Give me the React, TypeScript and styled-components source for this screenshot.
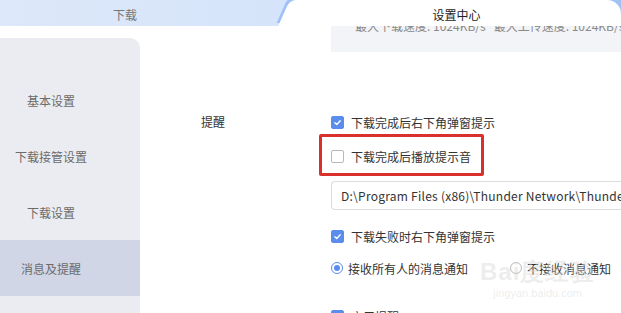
import React from "react";
import styled, { createGlobalStyle } from "styled-components";

const Global = createGlobalStyle`
  html, body { margin: 0; padding: 0; background: #fff; }
  body { font-family: "Noto Sans CJK SC", "Microsoft YaHei", sans-serif; }
  #root { width: 621px; height: 313px; overflow: hidden; }
`;

const Page = styled.div`
  position: relative;
  width: 621px;
  height: 313px;
  overflow: hidden;
  display: flex;
  flex-direction: column;
  background: #fff;
  font-size: 12px;
`;

const TabBar = styled.div`
  position: relative;
  z-index: 2;
  flex: 0 0 26px;
  display: flex;
  background: linear-gradient(90deg, #dde8f9 0%, #d3e3fb 60%, #c9ddfb 100%);
`;

const Tab = styled.div<{ $active?: boolean }>`
  position: relative;
  display: flex;
  align-items: center;
  justify-content: center;
  color: ${(p) => (p.$active ? "#222" : "#777")};
  ${(p) =>
    p.$active
      ? `
    flex: 1;
    margin-left: 14px;
    background: #fff;
    border-top-right-radius: 14px;
    box-shadow: 10px -6px 0 -2px #9fc2f6;
    &::before {
      content: "";
      position: absolute;
      left: -8px;
      top: 0;
      bottom: 0;
      width: 24px;
      background: #fff;
      transform: skewX(-24deg);
      border-top-left-radius: 6px;
      box-shadow: -3px -3px 0 0 #9fc2f6;
    }
    & > span { position: relative; padding-top: 3px; }
  `
      : `
    width: 278px;
    padding-top: 2px;
    & > span { position: relative; left: -14px; }
  `}
`;

const Body = styled.div`
  flex: 1;
  display: flex;
  min-height: 0;
`;

const Sidebar = styled.nav`
  flex: 0 0 140px;
  margin-top: 12px;
  padding-top: 34px;
  background: #ebecf1;
  border-top-right-radius: 10px;
  display: flex;
  flex-direction: column;
`;

const NavItem = styled.div<{ $active?: boolean }>`
  flex-shrink: 0;
  height: 56px;
  display: flex;
  align-items: center;
  padding-left: ${(p) => (p.$active ? "21px" : "0")};
  justify-content: ${(p) => (p.$active ? "flex-start" : "center")};
  padding-right: ${(p) => (p.$active ? "0" : "38px")};
  color: #6b6b6b;
  background: ${(p) => (p.$active ? "#d0d6e6" : "transparent")};
`;

const Content = styled.div`
  position: relative;
  flex: 1;
  overflow: hidden;
  padding-left: 61px;
  display: flex;
  flex-direction: column;
`;

const SpeedBox = styled.div`
  flex-shrink: 0;
  margin-left: 130px;
  height: 26px;
  background: #f3f4f7;
  overflow: hidden;
  color: #8a8a8a;
  font-size: 12px;
  line-height: 14px;
  white-space: nowrap;
  & > span { display: block; margin-top: -7px; padding-left: 24px; }
`;

const Section = styled.div`
  flex-shrink: 0;
  display: grid;
  grid-template-columns: 130px 1fr;
  margin-top: 60px;
`;

const Label = styled.div`
  color: #333;
  line-height: 20px;
`;

const Controls = styled.div`
  display: flex;
  flex-direction: column;
`;

const Row = styled.div<{ $mt?: number }>`
  flex-shrink: 0;
  height: 20px;
  display: flex;
  align-items: center;
  gap: 7px;
  color: #333;
  white-space: nowrap;
  margin-top: ${(p) => p.$mt ?? 0}px;
`;

const Box = styled.span<{ $checked?: boolean }>`
  width: 13px;
  height: 13px;
  box-sizing: border-box;
  border-radius: 2px;
  display: inline-flex;
  align-items: center;
  justify-content: center;
  flex: 0 0 13px;
  background: ${(p) => (p.$checked ? "#5b8def" : "#fff")};
  border: 1px solid ${(p) => (p.$checked ? "#5b8def" : "#b9b9b9")};
`;

const Radio = styled.span<{ $checked?: boolean }>`
  width: 12px;
  height: 12px;
  box-sizing: border-box;
  border-radius: 50%;
  flex: 0 0 12px;
  border: 1px solid ${(p) => (p.$checked ? "#5b8def" : "#b9b9b9")};
  display: inline-flex;
  align-items: center;
  justify-content: center;
  &::after {
    content: "";
    width: 6px;
    height: 6px;
    border-radius: 50%;
    background: ${(p) => (p.$checked ? "#5b8def" : "transparent")};
  }
`;

const RadioItem = styled.span<{ $ml?: number }>`
  display: inline-flex;
  align-items: center;
  gap: 5px;
  margin-left: ${(p) => p.$ml ?? 0}px;
`;

const PathInput = styled.div`
  flex-shrink: 0;
  margin-top: 15px;
  height: 29px;
  box-sizing: border-box;
  border: 1px solid #dcdcdc;
  border-right: none;
  border-radius: 4px 0 0 4px;
  display: flex;
  align-items: center;
  padding-left: 9px;
  color: #333;
  white-space: nowrap;
  overflow: hidden;
  font-size: 12px;
  letter-spacing: 0.25px;
`;

const Highlight = styled.div`
  position: absolute;
  left: 179px;
  top: 108px;
  width: 165px;
  height: 42px;
  box-sizing: border-box;
  border: 3px solid #d9302c;
  border-radius: 2px;
  pointer-events: none;
`;

const Watermark = styled.div`
  position: absolute;
  left: 340px;
  top: 233px;
  color: rgba(215, 215, 215, 0.45);
  font-family: "Liberation Sans", sans-serif;
  pointer-events: none;
  display: flex;
  flex-direction: column;
  align-items: center;
  & > b { font-size: 24px; font-weight: 700; letter-spacing: 1px; line-height: 26px; }
  & > i { font-size: 11px; font-style: normal; margin-top: 2px; }
`;

const Check = () => (
  <svg width="9" height="9" viewBox="0 0 10 10">
    <path d="M2 5.2 L4.2 7.2 L8 3" fill="none" stroke="#fff" strokeWidth="1.5" strokeLinecap="round" strokeLinejoin="round" />
  </svg>
);

export default function App() {
  return (
    <>
      <Global />
      <Page>
        <TabBar>
          <Tab><span>下载</span></Tab>
          <Tab $active><span>设置中心</span></Tab>
        </TabBar>
        <Body>
          <Sidebar>
            <NavItem>基本设置</NavItem>
            <NavItem>下载接管设置</NavItem>
            <NavItem>下载设置</NavItem>
            <NavItem $active>消息及提醒</NavItem>
          </Sidebar>
          <Content>
            <SpeedBox>
              <span>最大下载速度: 1024KB/s&nbsp;&nbsp;&nbsp;最大上传速度: 1024KB/s</span>
            </SpeedBox>
            <Section>
              <Label>提醒</Label>
              <Controls>
                <Row>
                  <Box $checked><Check /></Box>下载完成后右下角弹窗提示
                </Row>
                <Row $mt={14}>
                  <Box />下载完成后播放提示音
                </Row>
                <PathInput>D:\Program Files (x86)\Thunder Network\Thunder\Program\sound.wav</PathInput>
                <Row $mt={16}>
                  <Box $checked><Check /></Box>下载失败时右下角弹窗提示
                </Row>
                <Row $mt={12}>
                  <RadioItem><Radio $checked />接收所有人的消息通知</RadioItem>
                  <RadioItem $ml={35}><Radio />不接收消息通知</RadioItem>
                </Row>
                <Row $mt={28}>
                  <Box $checked><Check /></Box>启用提醒
                </Row>
              </Controls>
            </Section>
            <Highlight />
            <Watermark>
              <b>Bai度经验</b>
              <i>jingyan.baidu.com</i>
            </Watermark>
          </Content>
        </Body>
      </Page>
    </>
  );
}
